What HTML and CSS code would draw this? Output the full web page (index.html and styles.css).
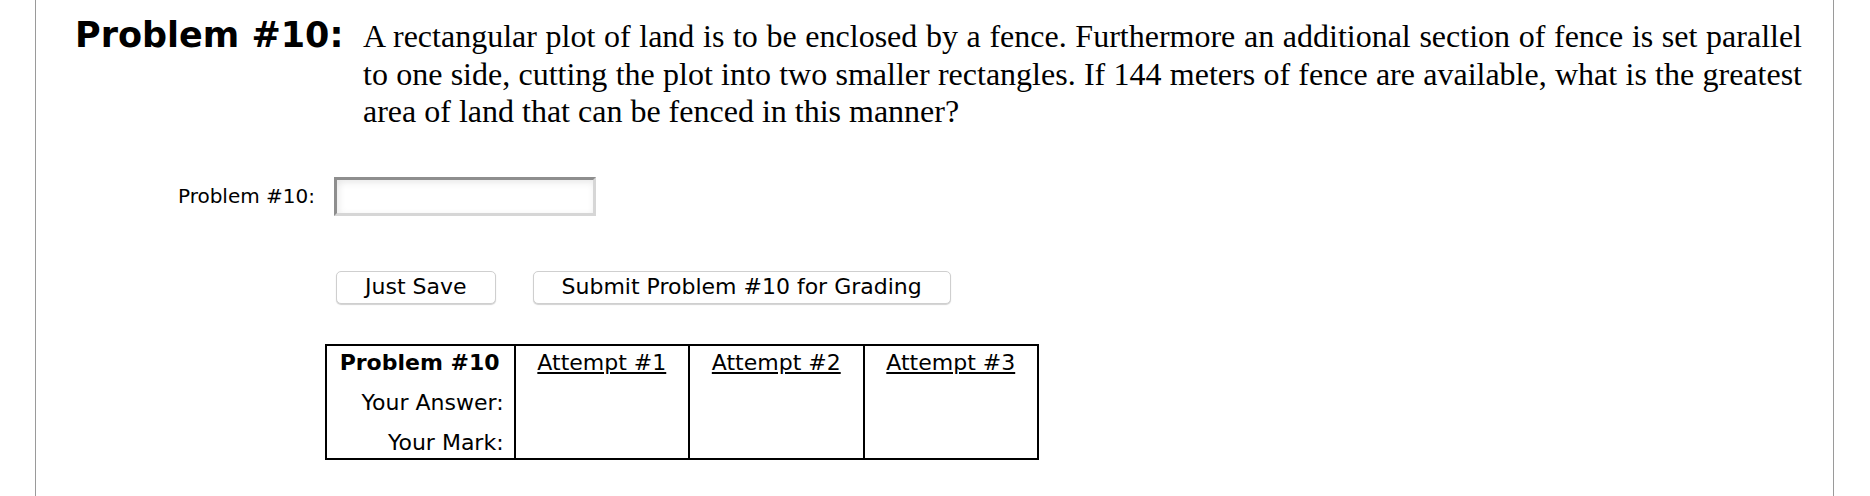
FILE: index.html
```html
<!DOCTYPE html>
<html lang="en">
<head>
<meta charset="utf-8">
<title>Problem #10</title>
<link rel="stylesheet" href="styles.css">
</head>
<body>
<div class="page">
  <div class="question">
    <div class="q-label">Problem #10:</div>
    <p class="q-text">A rectangular plot of land is to be enclosed by a fence. Furthermore an additional section of fence is set parallel to one side, cutting the plot into two smaller rectangles. If 144 meters of fence are available, what is the greatest area of land that can be fenced in this manner?</p>
  </div>

  <div class="answer-row">
    <label class="answer-label" for="ans">Problem #10:</label>
    <input class="answer-input" id="ans" type="text">
  </div>

  <div class="button-row">
    <button class="btn" type="button">Just Save</button>
    <button class="btn" type="button">Submit Problem #10 for Grading</button>
  </div>

  <table class="attempts">
    <tr class="r1">
      <th class="head">Problem #10</th>
      <td class="att"><a href="#">Attempt #1</a></td>
      <td class="att"><a href="#">Attempt #2</a></td>
      <td class="att"><a href="#">Attempt #3</a></td>
    </tr>
    <tr class="r2">
      <td class="lbl">Your Answer:</td>
      <td class="att"></td>
      <td class="att"></td>
      <td class="att"></td>
    </tr>
    <tr class="r3">
      <td class="lbl">Your Mark:</td>
      <td class="att"></td>
      <td class="att"></td>
      <td class="att"></td>
    </tr>
  </table>
</div>
</body>
</html>
```

FILE: styles.css
```css
html, body {
  margin: 0;
  padding: 0;
  background: #ffffff;
}

body {
  font-family: "DejaVu Sans", Verdana, sans-serif;
  color: #000;
}

.page {
  box-sizing: border-box;
  margin-left: 35px;
  width: 1799px;
  min-height: 100vh;
  border-left: 1px solid #9a9a9a;
  border-right: 1px solid #9a9a9a;
  padding-top: 15px;
}

/* question heading + text */
.question {
  display: flex;
  align-items: baseline;
  padding-left: 39px;
}

.q-label {
  width: 288px;
  flex: none;
  font-family: "DejaVu Sans", Verdana, sans-serif;
  font-weight: bold;
  font-size: 35px;
  line-height: 41px;
}

.q-text {
  margin: 0;
  width: 1439px;
  flex: none;
  font-family: "Liberation Serif", "Times New Roman", serif;
  font-size: 32px;
  line-height: 37.5px;
  text-align: justify;
}

/* answer input row */
.answer-row {
  display: flex;
  align-items: center;
  margin-top: 46px;
}

.answer-label {
  width: 279px;
  flex: none;
  text-align: right;
  font-size: 20px;
  line-height: 24px;
}

.answer-input {
  box-sizing: border-box;
  margin: 0 0 0 19px;
  width: 262px;
  height: 39px;
  border: 3px solid;
  border-color: #8e8e8e #d6d6d6 #d6d6d6 #8e8e8e;
  background: #fff;
  box-shadow: inset 0 4px 6px rgba(0, 0, 0, 0.06), inset 4px 0 6px rgba(0, 0, 0, 0.04);
  padding: 0 6px;
  font-family: "DejaVu Sans", Verdana, sans-serif;
  font-size: 20px;
  outline: none;
}

/* buttons */
.button-row {
  display: flex;
  gap: 37px;
  margin-top: 55px;
  padding-left: 300px;
}

.btn {
  box-sizing: border-box;
  height: 33px;
  margin: 0;
  padding: 0 28px;
  background: #fff;
  border: 1px solid #cfcfcf;
  border-radius: 5px;
  box-shadow: 0 1px 1px rgba(0, 0, 0, 0.18);
  font-family: "DejaVu Sans", Verdana, sans-serif;
  font-size: 22px;
  line-height: 26px;
  color: #000;
}

/* attempts table */
.attempts {
  margin: 40px 0 0 289px;
  width: 714px;
  border: 2px solid #000;
  border-collapse: separate;
  border-spacing: 0;
  font-size: 22px;
  line-height: 26px;
  table-layout: fixed;
}

.attempts th,
.attempts td {
  padding: 0;
  vertical-align: top;
}

.attempts .head,
.attempts .lbl {
  width: 185px;
  text-align: right;
}

.attempts .head {
  font-weight: bold;
  padding-right: 14px;
}

.attempts .lbl {
  font-weight: normal;
  padding-right: 10px;
}

.attempts .att {
  width: 173px;
  border-left: 2px solid #000;
  text-align: center;
}

.attempts .att a {
  color: #000;
  text-decoration: underline;
}

.attempts .r1 th,
.attempts .r1 td {
  height: 38px;
  padding-top: 4px;
  box-sizing: border-box;
}

.attempts .r2 td {
  height: 38px;
  padding-top: 6px;
  box-sizing: border-box;
}

.attempts .r3 td {
  height: 36px;
  padding-top: 8px;
  box-sizing: border-box;
}
```
